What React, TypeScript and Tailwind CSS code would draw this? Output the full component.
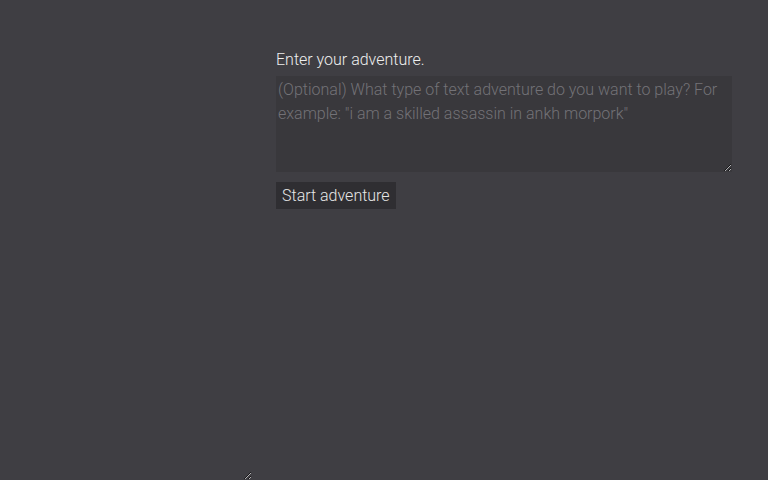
import React, { useState } from 'react';

export default function App() {
  const [prompt, setPrompt] = useState('');
  const [log, setLog] = useState('');

  return (
    <div
      className="w-full h-[480px] overflow-hidden bg-[#3f3e43] text-[#ececec] font-light flex"
      style={{ fontFamily: 'Roboto, "Noto Sans", sans-serif' }}
    >
      {/* Story log */}
      <textarea
        value={log}
        onChange={(e) => setLog(e.target.value)}
        className="w-[252px] h-[480px] shrink-0 bg-transparent p-[2px] text-base leading-6 outline-none resize"
      />

      {/* Start form */}
      <div className="flex-1 pl-6 pr-9 pt-12 flex flex-col items-start">
        <label className="text-base leading-6 text-[#eeeeee] mb-1">Enter your adventure.</label>
        <textarea
          value={prompt}
          onChange={(e) => setPrompt(e.target.value)}
          placeholder={'(Optional) What type of text adventure do you want to play? For example: "i am a skilled assassin in ankh morpork"'}
          className="w-full h-[96px] bg-[#39383c] px-[2px] pt-[2px] pb-0 text-base leading-6 font-light outline-none placeholder:text-[#737277] resize"
        />
        <button className="mt-[10px] bg-[#2f2e32] px-[6px] py-[1.5px] text-base leading-6 font-light text-[#e6e6e6]">
          Start adventure
        </button>
      </div>
    </div>
  );
}
